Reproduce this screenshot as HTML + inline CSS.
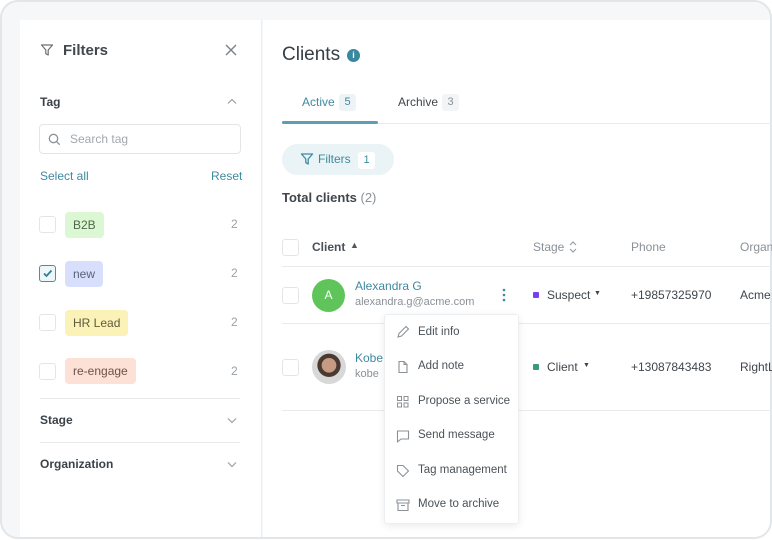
<!DOCTYPE html>
<html><head><style>
*{box-sizing:border-box;margin:0;padding:0}
body{width:772px;height:540px;background:#fff;font-family:"Liberation Sans",sans-serif;position:relative;overflow:hidden;color:#3b4248}
.frame{position:absolute;left:0;top:0;width:772px;height:539px;border:2px solid #e2e6e9;border-radius:18px;background:#f6f7f8;overflow:hidden}
.a{position:absolute}
.left{left:18px;top:18px;width:242px;height:530px;background:#fff;border-right:1px solid #eceef0}
.right{left:261px;top:18px;width:520px;height:530px;background:#fff}
.t{position:absolute;white-space:nowrap}
.cb{position:absolute;width:17px;height:17px;border:1px solid #e3e6e9;border-radius:3px;background:#fff}
.chip{position:absolute;height:26px;border-radius:4px;font-size:12px;line-height:26px;padding:0 8px}
.cnt{position:absolute;left:231px;font-size:12px;color:#9aa1a7}
.hr{position:absolute;height:1px;background:#e8ebed}
.mi{position:absolute;left:418px;font-size:11.5px;color:#4a5258}
.ic{position:absolute;left:396px}
</style></head><body>
<div class="frame">
<div class="a left"></div>
<div class="a right"></div>
</div>
<!-- left panel -->
<svg class="a" style="left:40px;top:43px" width="14" height="14" viewBox="0 0 14 14"><path d="M1.5 2h11l-4.3 5v5l-2.4-1.3V7z" fill="none" stroke="#6b7278" stroke-width="1.2" stroke-linejoin="round"/></svg>
<div class="t" style="left:63px;top:42px;font-size:15px;font-weight:bold;color:#40474d">Filters</div>
<svg class="a" style="left:225px;top:44px" width="12" height="12"><path d="M1 1l10 10M11 1L1 11" stroke="#7a8187" stroke-width="1.4"/></svg>
<div class="t" style="left:40px;top:95px;font-size:12px;font-weight:bold">Tag</div>
<svg class="a" style="left:227px;top:98px" width="10" height="7"><path d="M1 5.5l4-4 4 4" fill="none" stroke="#9aa1a7" stroke-width="1.2"/></svg>
<div class="a" style="left:39px;top:124px;width:202px;height:30px;border:1px solid #e3e6e9;border-radius:4px"></div>
<svg class="a" style="left:48px;top:133px" width="13" height="13"><circle cx="5.5" cy="5.5" r="4.2" fill="none" stroke="#8a9197" stroke-width="1.3"/><path d="M8.7 8.7l3 3" stroke="#8a9197" stroke-width="1.3"/></svg>
<div class="t" style="left:70px;top:132px;font-size:12px;color:#a2a8ad">Search tag</div>
<div class="t" style="left:40px;top:169px;font-size:12px;color:#3e8aa0">Select all</div>
<div class="t" style="left:211px;top:169px;font-size:12px;color:#3e8aa0">Reset</div>
<div class="cb" style="left:39px;top:216px"></div>
<div class="chip" style="left:65px;top:212px;background:#dcf7d3;color:#4d6a48">B2B</div>
<div class="cnt" style="top:217px">2</div>
<div class="cb" style="left:39px;top:265px;border-color:#4a8fa3;background:#eef6f8"></div>
<svg class="a" style="left:42px;top:268px" width="11" height="11"><path d="M2 5.5l2.5 2.5L9.5 2.5" fill="none" stroke="#2f7f96" stroke-width="1.8"/></svg>
<div class="chip" style="left:65px;top:261px;background:#d8dffc;color:#5b6277">new</div>
<div class="cnt" style="top:266px">2</div>
<div class="cb" style="left:39px;top:314px"></div>
<div class="chip" style="left:65px;top:310px;background:#fbf2b8;color:#5e5a3c">HR Lead</div>
<div class="cnt" style="top:315px">2</div>
<div class="cb" style="left:39px;top:363px"></div>
<div class="chip" style="left:65px;top:358px;background:#fde0d6;color:#6d5149">re-engage</div>
<div class="cnt" style="top:364px">2</div>
<div class="hr" style="left:40px;top:398px;width:200px"></div>
<div class="t" style="left:40px;top:413px;font-size:12px;font-weight:bold">Stage</div>
<svg class="a" style="left:227px;top:417px" width="10" height="7"><path d="M1 1.5l4 4 4-4" fill="none" stroke="#9aa1a7" stroke-width="1.2"/></svg>
<div class="hr" style="left:40px;top:442px;width:200px"></div>
<div class="t" style="left:40px;top:457px;font-size:12px;font-weight:bold">Organization</div>
<svg class="a" style="left:227px;top:461px" width="10" height="7"><path d="M1 1.5l4 4 4-4" fill="none" stroke="#9aa1a7" stroke-width="1.2"/></svg>
<!-- right -->
<div class="t" style="left:282px;top:44px;font-size:19px;color:#373e44">Clients</div>
<div class="a" style="left:347px;top:49px;width:13px;height:13px;border-radius:50%;background:#3a87a0;color:#fff;font-size:9px;font-weight:bold;text-align:center;line-height:13px">i</div>
<div class="t" style="left:302px;top:95px;font-size:12px;color:#3e8aa0">Active</div>
<div class="a" style="left:339px;top:94px;width:17px;height:17px;background:#eef3f5;border-radius:3px;font-size:11px;color:#3e8aa0;text-align:center;line-height:17px">5</div>
<div class="t" style="left:398px;top:95px;font-size:12px;color:#3f464c">Archive</div>
<div class="a" style="left:442px;top:94px;width:17px;height:17px;background:#f3f4f5;border-radius:3px;font-size:11px;color:#8a9197;text-align:center;line-height:17px">3</div>
<div class="hr" style="left:282px;top:123px;width:490px;background:#e9ecee"></div>
<div class="a" style="left:282px;top:121px;width:96px;height:3px;background:#5b9fb0;border-radius:2px"></div>
<div class="a" style="left:282px;top:144px;width:112px;height:31px;background:#eaf3f5;border-radius:16px"></div>
<svg class="a" style="left:300px;top:152px" width="14" height="14" viewBox="0 0 14 14"><path d="M1.5 2h11l-4.3 5v5l-2.4-1.3V7z" fill="none" stroke="#3e8aa0" stroke-width="1.3" stroke-linejoin="round"/></svg>
<div class="t" style="left:318px;top:152px;font-size:12px;color:#3e8aa0">Filters</div>
<div class="a" style="left:358px;top:152px;width:17px;height:17px;background:#fff;border-radius:3px;font-size:11px;color:#3e8aa0;text-align:center;line-height:17px">1</div>
<div class="t" style="left:282px;top:190px;font-size:13px;font-weight:bold;color:#3f464c">Total clients <span style="font-weight:normal;color:#8a9197">(2)</span></div>
<div class="cb" style="left:282px;top:239px"></div>
<div class="t" style="left:312px;top:240px;font-size:12px;font-weight:bold;color:#4a5157">Client</div>
<div class="t" style="left:350px;top:240px;font-size:9px;color:#555">&#9650;</div>
<div class="t" style="left:533px;top:240px;font-size:12px;color:#8a9197">Stage</div>
<svg class="a" style="left:569px;top:240px" width="8" height="14"><path d="M1 5l3-3 3 3M1 9l3 3 3-3" fill="none" stroke="#9aa1a7" stroke-width="1.2"/></svg>
<div class="t" style="left:631px;top:240px;font-size:12px;color:#8a9197">Phone</div>
<div class="t" style="left:740px;top:240px;font-size:12px;color:#8a9197">Organ</div>
<div class="hr" style="left:282px;top:266px;width:490px"></div>
<div class="cb" style="left:282px;top:287px"></div>
<div class="a" style="left:312px;top:279px;width:33px;height:33px;border-radius:50%;background:#5fc55a;color:#fff;font-size:12px;text-align:center;line-height:33px">A</div>
<div class="t" style="left:355px;top:279px;font-size:12px;color:#3e8aa0">Alexandra G</div>
<div class="t" style="left:355px;top:296px;font-size:11px;color:#8a9197">alexandra.g@acme.com</div>
<svg class="a" style="left:502px;top:288px" width="4" height="14"><circle cx="2" cy="2" r="1.3" fill="#3e8aa0"/><circle cx="2" cy="7" r="1.3" fill="#3e8aa0"/><circle cx="2" cy="12" r="1.3" fill="#3e8aa0"/></svg>
<div class="a" style="left:533px;top:292px;width:6px;height:6px;background:#7a3ff2;border-radius:1px"></div>
<div class="t" style="left:547px;top:288px;font-size:12px;color:#3f464c">Suspect</div>
<div class="t" style="left:594px;top:290px;font-size:7px;color:#444">&#9660;</div>
<div class="t" style="left:631px;top:288px;font-size:12px;color:#3f464c">+19857325970</div>
<div class="t" style="left:740px;top:288px;font-size:12px;color:#3f464c">Acme</div>
<div class="hr" style="left:282px;top:323px;width:490px"></div>
<div class="cb" style="left:282px;top:359px"></div>
<div class="a" style="left:312px;top:350px;width:34px;height:34px;border-radius:50%;background:radial-gradient(circle at 50% 45%,#c79a82 0 28%,#4a3a32 30% 45%,#d8d8d8 47%)"></div>
<div class="t" style="left:355px;top:351px;font-size:12px;color:#3e8aa0">Kobe</div>
<div class="t" style="left:355px;top:368px;font-size:11px;color:#8a9197">kobe</div>
<div class="a" style="left:533px;top:364px;width:6px;height:6px;background:#3a9a78;border-radius:1px"></div>
<div class="t" style="left:547px;top:360px;font-size:12px;color:#3f464c">Client</div>
<div class="t" style="left:583px;top:362px;font-size:7px;color:#444">&#9660;</div>
<div class="t" style="left:631px;top:360px;font-size:12px;color:#3f464c">+13087843483</div>
<div class="t" style="left:740px;top:360px;font-size:12px;color:#3f464c">RightL</div>
<div class="hr" style="left:282px;top:410px;width:490px"></div>
<!-- menu -->
<div class="a" style="left:384px;top:314px;width:135px;height:210px;background:#fff;border:1px solid #eceef0;border-radius:3px;box-shadow:0 2px 8px rgba(0,0,0,.08)"></div>
<svg class="ic" style="top:325px" width="14" height="14"><path d="M2 12l1-3.5L10 1.5l2.5 2.5-7 7z" fill="none" stroke="#8a9197" stroke-width="1.1"/></svg>
<div class="mi" style="top:326px">Edit info</div>
<svg class="ic" style="top:360px" width="14" height="14"><path d="M3 1.5h5l3 3v8H3z M8 1.5v3h3" fill="none" stroke="#8a9197" stroke-width="1.1"/></svg>
<div class="mi" style="top:360px">Add note</div>
<svg class="ic" style="top:395px" width="14" height="14"><rect x="1.5" y="1.5" width="4" height="4" fill="none" stroke="#8a9197"/><rect x="8" y="1.5" width="4" height="4" fill="none" stroke="#8a9197"/><rect x="1.5" y="8" width="4" height="4" fill="none" stroke="#8a9197"/><rect x="8" y="8" width="4" height="4" fill="none" stroke="#8a9197"/></svg>
<div class="mi" style="top:395px">Propose a service</div>
<svg class="ic" style="top:429px" width="14" height="14"><path d="M1.5 2h11v8H5l-3.5 3z" fill="none" stroke="#8a9197" stroke-width="1.1" stroke-linejoin="round"/></svg>
<div class="mi" style="top:429px">Send message</div>
<svg class="ic" style="top:464px" width="14" height="14"><path d="M1.5 1.5h5.5l5.5 5.5-5.5 5.5L1.5 7z" fill="none" stroke="#8a9197" stroke-width="1.1" stroke-linejoin="round"/></svg>
<div class="mi" style="top:464px">Tag management</div>
<svg class="ic" style="top:498px" width="14" height="14"><path d="M1 2h12v3H1z M2 5v7.5h10V5 M5 7.5h4" fill="none" stroke="#8a9197" stroke-width="1.1"/></svg>
<div class="mi" style="top:498px">Move to archive</div>
</body></html>
